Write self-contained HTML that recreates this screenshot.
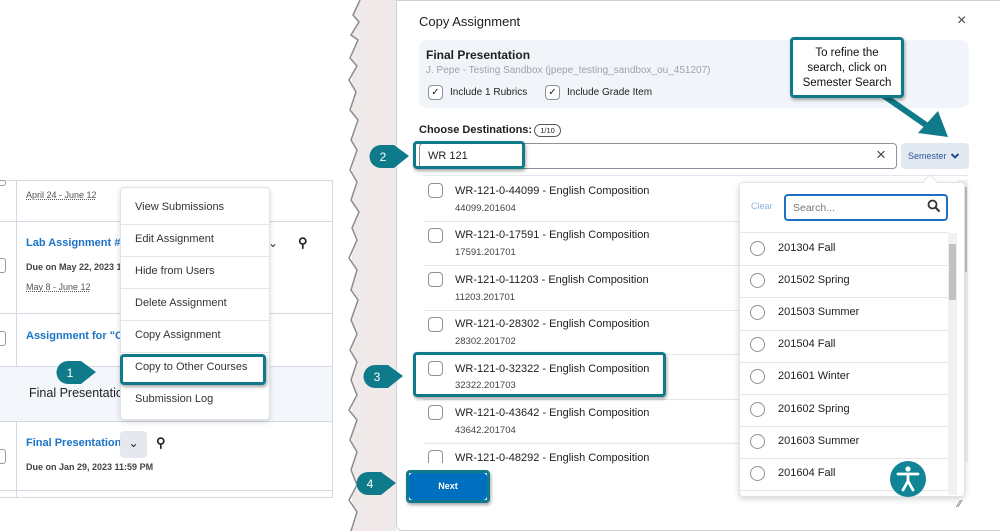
<!DOCTYPE html>
<html><head><style>
*{box-sizing:border-box;margin:0;padding:0}
body{width:1000px;height:531px;background:#fff;position:relative;overflow:hidden;font-family:"Liberation Sans",sans-serif;color:#202122}
.a{position:absolute}
.hl{position:absolute;border:3px solid #0f7a8a;border-radius:4px;box-shadow:1px 2px 3px rgba(0,0,0,.35)}
.t{font-size:11px;color:#202122}
.sub{font-size:9.5px;color:#444}
.cb{position:absolute;width:15px;height:15px;border:1px solid #8a929c;border-radius:4px;background:#fff}
.rad{position:absolute;width:15px;height:15px;border:1px solid #8a929c;border-radius:50%}
.line{position:absolute;height:1px;background:#e3e6ea}
.mi{position:absolute;left:14px;font-size:11px;color:#333}
</style></head><body>

<!-- Left table -->
<div class="a" style="left:0;top:180px;width:333px;height:318px;border:1px solid #d3d9e3;border-left:none"></div>
<div class="a" style="left:16px;top:180px;width:1px;height:318px;background:#d3d9e3"></div>
<div class="a" style="left:0;top:366px;width:332px;height:55px;background:#f3f6fb"></div>
<div class="line" style="left:0;top:221px;width:332px;background:#d3d9e3"></div>
<div class="line" style="left:0;top:313px;width:332px;background:#d3d9e3"></div>
<div class="line" style="left:0;top:366px;width:332px;background:#d3d9e3"></div>
<div class="line" style="left:0;top:421px;width:332px;background:#d3d9e3"></div>
<div class="line" style="left:0;top:490px;width:332px;background:#d3d9e3"></div>
<div class="a" style="left:-6px;top:180px;width:12px;height:6px;border:1px solid #999;border-radius:3px"></div>
<div class="a" style="left:-6px;top:258px;width:12px;height:15px;border:1px solid #999;border-radius:3px"></div>
<div class="a" style="left:-6px;top:331px;width:12px;height:15px;border:1px solid #999;border-radius:3px"></div>
<div class="a" style="left:-6px;top:449px;width:12px;height:15px;border:1px solid #999;border-radius:3px"></div>
<div class="a" style="left:26px;top:190px;font-size:9px;color:#555;text-decoration:underline dotted">April 24 - June 12</div>
<div class="a" style="left:26px;top:237px;font-size:11px;font-weight:bold;color:#1a73c6">Lab Assignment #6</div>
<div class="a" style="left:26px;top:262px;font-size:9px;font-weight:bold;color:#444">Due on May 22, 2023 1</div>
<div class="a" style="left:26px;top:282px;font-size:9px;color:#555;text-decoration:underline dotted">May 8 - June 12</div>
<div class="a" style="left:268px;top:236px;font-size:12px;color:#333">⌄</div>
<div class="a" style="left:298px;top:235px;font-size:13px;font-weight:bold">⚲</div>
<div class="a" style="left:26px;top:330px;font-size:11px;font-weight:bold;color:#1a73c6">Assignment for "Or</div>
<div class="a" style="left:29px;top:386px;font-size:12.5px;color:#222">Final Presentatio</div>
<div class="a" style="left:26px;top:437px;font-size:11px;font-weight:bold;color:#1a73c6">Final Presentation</div>
<div class="a" style="left:120px;top:431px;width:27px;height:27px;background:#e5e9ef;border-radius:4px;text-align:center;font-size:12px;line-height:24px">⌄</div>
<div class="a" style="left:156px;top:435px;font-size:13px;font-weight:bold">⚲</div>
<div class="a" style="left:26px;top:462px;font-size:9px;font-weight:bold;color:#444">Due on Jan 29, 2023 11:59 PM</div>

<!-- menu -->
<div class="a" style="left:120px;top:187px;width:150px;height:233px;background:#fff;border:1px solid #dfe3e8;border-radius:4px;box-shadow:0 2px 6px rgba(0,0,0,.15)">
<div class="mi" style="top:13px">View Submissions</div>
<div class="line" style="left:0;top:36px;width:148px"></div>
<div class="mi" style="top:45px">Edit Assignment</div>
<div class="line" style="left:0;top:68px;width:148px"></div>
<div class="mi" style="top:77px">Hide from Users</div>
<div class="line" style="left:0;top:100px;width:148px"></div>
<div class="mi" style="top:109px">Delete Assignment</div>
<div class="line" style="left:0;top:132px;width:148px"></div>
<div class="mi" style="top:141px">Copy Assignment</div>
<div class="line" style="left:0;top:164px;width:148px"></div>
<div class="mi" style="top:173px">Copy to Other Courses</div>
<div class="mi" style="top:205px">Submission Log</div>
</div>
<div class="hl" style="left:120px;top:354px;width:146px;height:31px"></div>

<!-- torn strip -->
<div class="a" style="left:352px;top:0;width:44px;height:531px;background:#efe9ea"></div>
<svg class="a" style="left:345px;top:0" width="30" height="531"><path d="M15 0 L8 15 L14 22 L6 35 L13 40 L5 58 L12 66 L4 80 L11 92 L5 110 L13 120 L6 140 L12 150 L5 170 L12 182 L6 200 L14 212 L7 228 L12 240 L4 258 L12 270 L6 290 L13 300 L6 320 L12 334 L5 350 L12 362 L6 380 L12 395 L4 410 L12 420 L5 440 L12 452 L6 470 L12 485 L4 500 L12 512 L6 531 L0 531 L0 0Z" fill="#fff"/><path d="M15 0 L8 15 L14 22 L6 35 L13 40 L5 58 L12 66 L4 80 L11 92 L5 110 L13 120 L6 140 L12 150 L5 170 L12 182 L6 200 L14 212 L7 228 L12 240 L4 258 L12 270 L6 290 L13 300 L6 320 L12 334 L5 350 L12 362 L6 380 L12 395 L4 410 L12 420 L5 440 L12 452 L6 470 L12 485 L4 500 L12 512 L6 531" fill="none" stroke="#8c8c8c" stroke-width="1.5"/></svg>

<!-- dialog -->
<div class="a" style="left:396px;top:0;width:610px;height:531px;background:#fff;border:1px solid #cdd3da;border-radius:0 0 6px 6px"></div>
<div class="a" style="left:419px;top:14px;font-size:13px;color:#202122">Copy Assignment</div>
<div class="a" style="left:957px;top:12px;font-size:16px;color:#444">×</div>
<div class="a" style="left:419px;top:40px;width:550px;height:68px;background:#f1f5fa;border-radius:8px"></div>
<div class="a" style="left:426px;top:48px;font-size:12px;font-weight:bold">Final Presentation</div>
<div class="a" style="left:426px;top:65px;font-size:10px;color:#9ca3ab">J. Pepe - Testing Sandbox (jpepe_testing_sandbox_ou_451207)</div>
<div class="cb" style="left:428px;top:85px;text-align:center;font-size:10px;line-height:13px">✓</div>
<div class="a t" style="left:450px;top:87px;font-size:10px">Include 1 Rubrics</div>
<div class="cb" style="left:545px;top:85px;text-align:center;font-size:10px;line-height:13px">✓</div>
<div class="a t" style="left:567px;top:87px;font-size:10px">Include Grade Item</div>
<div class="a" style="left:419px;top:124px;font-size:11px;font-weight:bold">Choose Destinations:</div>
<div class="a" style="left:534px;top:124px;width:27px;height:13px;border:1px solid #555;border-radius:7px;font-size:7.5px;text-align:center;line-height:11px">1/10</div>
<div class="a" style="left:419px;top:143px;width:478px;height:26px;border:1px solid #8a929c;border-radius:4px"></div>
<div class="a" style="left:428px;top:150px;font-size:11px">WR 121</div>
<div class="a" style="left:876px;top:145px;font-size:17px;color:#444">×</div>
<div class="a" style="left:901px;top:143px;width:68px;height:26px;background:#e3e9f1;border-radius:4px;font-size:9px;color:#2a5a9a;line-height:26px;padding-left:7px">Semester</div>
<svg class="a" style="left:950px;top:152px" width="10" height="8"><path d="M1.5 2 L5 5.5 L8.5 2" stroke="#1f4f8f" stroke-width="2" fill="none"/></svg>

<!-- list -->
<div class="line" style="left:423px;top:175px;width:545px"></div>
<div class="cb" style="left:428px;top:183px"></div><div class="a t" style="left:455px;top:185px">WR-121-0-44099 - English Composition</div><div class="a sub" style="left:455px;top:203px">44099.201604</div>
<div class="line" style="left:423px;top:221px;width:320px"></div>
<div class="cb" style="left:428px;top:228px"></div><div class="a t" style="left:455px;top:229px">WR-121-0-17591 - English Composition</div><div class="a sub" style="left:455px;top:247px">17591.201701</div>
<div class="line" style="left:423px;top:265px;width:320px"></div>
<div class="cb" style="left:428px;top:272px"></div><div class="a t" style="left:455px;top:274px">WR-121-0-11203 - English Composition</div><div class="a sub" style="left:455px;top:292px">11203.201701</div>
<div class="line" style="left:423px;top:310px;width:320px"></div>
<div class="cb" style="left:428px;top:317px"></div><div class="a t" style="left:455px;top:318px">WR-121-0-28302 - English Composition</div><div class="a sub" style="left:455px;top:336px">28302.201702</div>
<div class="line" style="left:423px;top:354px;width:320px"></div>
<div class="cb" style="left:428px;top:361px"></div><div class="a t" style="left:455px;top:363px">WR-121-0-32322 - English Composition</div><div class="a sub" style="left:455px;top:380px">32322.201703</div>
<div class="line" style="left:423px;top:399px;width:320px"></div>
<div class="cb" style="left:428px;top:405px"></div><div class="a t" style="left:455px;top:407px">WR-121-0-43642 - English Composition</div><div class="a sub" style="left:455px;top:425px">43642.201704</div>
<div class="line" style="left:423px;top:443px;width:320px"></div>
<div class="a" style="left:428px;top:450px;width:15px;height:13px;border:1px solid #8a929c;border-bottom:none;border-radius:4px 4px 0 0"></div><div class="a t" style="left:455px;top:452px">WR-121-0-48292 - English Composition</div>
<div class="a" style="left:958px;top:180px;width:10px;height:283px;background:#f1f1f1"></div>
<div class="a" style="left:959px;top:187px;width:8px;height:85px;background:#c1c1c1"></div>

<!-- Next -->
<div class="a" style="left:409px;top:473px;width:78px;height:27px;background:#006fbf;border-radius:4px;color:#fff;font-size:9px;font-weight:bold;text-align:center;line-height:27px">Next</div>
<div class="hl" style="left:406px;top:470px;width:84px;height:33px"></div>
<div class="a" style="left:958px;top:499px;font-size:10px;color:#666">⁄⁄</div>

<!-- dropdown -->
<div class="a" style="left:739px;top:182px;width:226px;height:315px;background:#fff;border:1px solid #e0e3e7;border-radius:4px;box-shadow:0 2px 6px rgba(0,0,0,.18)"></div>
<div class="a" style="left:925px;top:176px;width:10px;height:10px;background:#fff;transform:rotate(45deg);border-left:1px solid #e0e3e7;border-top:1px solid #e0e3e7"></div>
<div class="a" style="left:751px;top:201px;font-size:9px;color:#8ab6e0">Clear</div>
<div class="a" style="left:784px;top:194px;width:164px;height:27px;border:2px solid #1c6fc4;border-radius:4px;font-size:10.5px;color:#777;padding:6px 0 0 7px">Search...</div>
<svg class="a" style="left:927px;top:199px" width="14" height="14"><circle cx="5.5" cy="5.5" r="4" fill="none" stroke="#333" stroke-width="1.8"/><path d="M8.5 8.5 L12.5 12.5" stroke="#333" stroke-width="2"/></svg>
<div class="line" style="left:740px;top:232px;width:208px"></div>
<div class="a" style="left:948px;top:233px;width:9px;height:262px;background:#f1f1f1"></div>
<div class="a" style="left:949px;top:244px;width:7px;height:56px;background:#c1c1c1"></div>
<div class="rad" style="left:750px;top:241px"></div><div class="a t" style="left:778px;top:242px">201304 Fall</div>
<div class="line" style="left:740px;top:265px;width:208px"></div>
<div class="rad" style="left:750px;top:273px"></div><div class="a t" style="left:778px;top:274px">201502 Spring</div>
<div class="line" style="left:740px;top:297px;width:208px"></div>
<div class="rad" style="left:750px;top:305px"></div><div class="a t" style="left:778px;top:306px">201503 Summer</div>
<div class="line" style="left:740px;top:330px;width:208px"></div>
<div class="rad" style="left:750px;top:337px"></div><div class="a t" style="left:778px;top:338px">201504 Fall</div>
<div class="line" style="left:740px;top:362px;width:208px"></div>
<div class="rad" style="left:750px;top:369px"></div><div class="a t" style="left:778px;top:370px">201601 Winter</div>
<div class="line" style="left:740px;top:394px;width:208px"></div>
<div class="rad" style="left:750px;top:402px"></div><div class="a t" style="left:778px;top:403px">201602 Spring</div>
<div class="line" style="left:740px;top:426px;width:208px"></div>
<div class="rad" style="left:750px;top:434px"></div><div class="a t" style="left:778px;top:435px">201603 Summer</div>
<div class="line" style="left:740px;top:458px;width:208px"></div>
<div class="rad" style="left:750px;top:466px"></div><div class="a t" style="left:778px;top:467px">201604 Fall</div>
<div class="line" style="left:740px;top:490px;width:208px"></div>

<!-- accessibility -->
<svg class="a" style="left:889px;top:460px" width="38" height="38"><circle cx="19" cy="19" r="18" fill="#0f8595"/><circle cx="19" cy="9" r="2.6" fill="#fff"/><path d="M9 14 L29 14 M19 14 L19 21 L14 30 M19 21 L24 30" stroke="#fff" stroke-width="2.8" fill="none" stroke-linecap="round"/></svg>

<!-- highlights -->
<div class="hl" style="left:413px;top:141px;width:112px;height:28px"></div>
<div class="hl" style="left:413px;top:352px;width:253px;height:45px"></div>

<!-- callout -->
<svg class="a" style="left:860px;top:85px" width="100" height="60"><path d="M20 8 L66 40" stroke="#0f7a8a" stroke-width="6"/><path d="M58 48 L88 52 L78 26Z" fill="#0f7a8a"/></svg>
<div class="a" style="left:790px;top:37px;width:114px;height:61px;background:#fff;border:3px solid #0f7a8a;border-radius:4px;box-shadow:1px 2px 3px rgba(0,0,0,.35);font-size:11.5px;text-align:center;line-height:15px;padding-top:6px;color:#111">To refine the<br>search, click on<br>Semester Search</div>

<!-- markers -->
<svg class="a" style="left:55px;top:360px" width="45" height="26"><path d="M13 1 L26 1 L41 12 L26 24 L13 24 A11.5 11.5 0 0 1 13 1Z" fill="#0f7a8a"/><text x="15" y="17" fill="#fff" font-size="12" font-family="Liberation Sans" text-anchor="middle">1</text></svg>
<svg class="a" style="left:368px;top:144px" width="45" height="26"><path d="M13 1 L26 1 L41 12 L26 24 L13 24 A11.5 11.5 0 0 1 13 1Z" fill="#0f7a8a"/><text x="15" y="17" fill="#fff" font-size="12" font-family="Liberation Sans" text-anchor="middle">2</text></svg>
<svg class="a" style="left:362px;top:364px" width="45" height="26"><path d="M13 1 L26 1 L41 12 L26 24 L13 24 A11.5 11.5 0 0 1 13 1Z" fill="#0f7a8a"/><text x="15" y="17" fill="#fff" font-size="12" font-family="Liberation Sans" text-anchor="middle">3</text></svg>
<svg class="a" style="left:355px;top:471px" width="45" height="26"><path d="M13 1 L26 1 L41 12 L26 24 L13 24 A11.5 11.5 0 0 1 13 1Z" fill="#0f7a8a"/><text x="15" y="17" fill="#fff" font-size="12" font-family="Liberation Sans" text-anchor="middle">4</text></svg>
</body></html>
